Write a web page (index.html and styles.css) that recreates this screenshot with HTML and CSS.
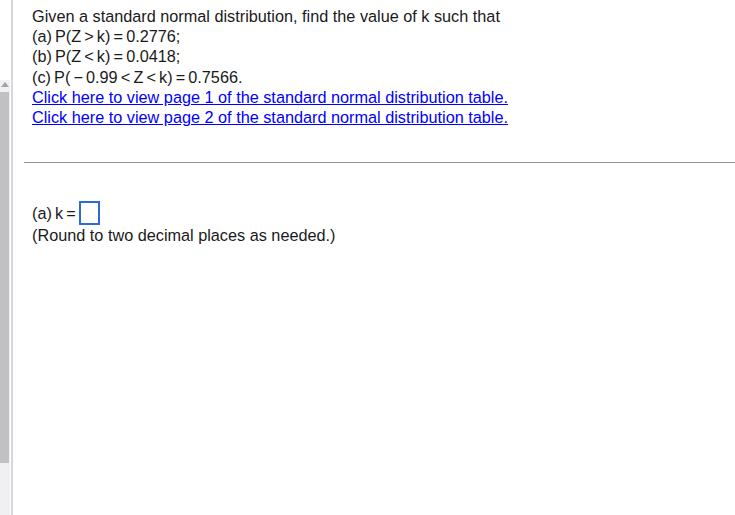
FILE: index.html
```html
<!DOCTYPE html>
<html>
<head>
<meta charset="utf-8">
<link rel="stylesheet" href="styles.css">
</head>
<body>
<div class="frame">
  <div class="scroller">
    <div class="scroll-top"></div>
    <div class="scroll-track">
      <div class="scroll-arrow"></div>
      <div class="scroll-thumb"></div>
    </div>
  </div>
  <div class="divider"></div>
  <main class="content">
    <div class="question">
      <div class="line">Given a standard normal distribution, find the value of k such that</div>
      <div class="line math">(a) P(Z &gt; k) = 0.2776;</div>
      <div class="line math">(b) P(Z &lt; k) = 0.0418;</div>
      <div class="line math">(c) P( − 0.99 &lt; Z &lt; k) = 0.7566.</div>
      <div class="line"><a href="#" class="link">Click here to view page 1 of the standard normal distribution table.</a></div>
      <div class="line"><a href="#" class="link">Click here to view page 2 of the standard normal distribution table.</a></div>
    </div>
    <hr class="rule">
    <div class="answer">
      <div class="line math answer-row">(a) k = <span class="input-box"></span></div>
      <div class="line">(Round to two decimal places as needed.)</div>
    </div>
  </main>
</div>
</body>
</html>
```
FILE: styles.css
```css
html, body {
  margin: 0;
  padding: 0;
  background: #ffffff;
}
body {
  width: 735px;
  height: 515px;
  overflow: hidden;
  font-family: "Liberation Sans", Arial, sans-serif;
  font-size: 16.25px;
  color: #1a1a1a;
}
.frame {
  display: flex;
  height: 515px;
}
.scroller {
  width: 10px;
  display: flex;
  flex-direction: column;
}
.scroll-top {
  height: 80px;
  background: #ffffff;
}
.scroll-track {
  flex: 1;
  background: #f0f0f0;
  display: flex;
  flex-direction: column;
}
.scroll-arrow {
  height: 12px;
}
.scroll-arrow::before {
  content: "";
  display: block;
  margin: 2px 0 0 1px;
  width: 0;
  height: 0;
  border-left: 4px solid transparent;
  border-right: 4px solid transparent;
  border-bottom: 5px solid #a3a3a3;
}
.scroll-thumb {
  height: 371px;
  width: 9px;
  background: #c1c1c1;
}
.divider {
  width: 2px;
  margin-left: 1px;
  background: #d6d6de;
}
.content {
  flex: 1;
  padding-top: 6px;
}
.question {
  padding-left: 19px;
}
.line {
  line-height: 20.2px;
  white-space: nowrap;
}
.math {
  word-spacing: -1.4px;
}
.link {
  color: #0000ff;
  text-decoration: underline;
}
.rule {
  border: none;
  border-top: 1px solid #8c96a8;
  height: 0;
  margin: 35px 0 0 11px;
}
.answer {
  padding-left: 19px;
  margin-top: 38px;
}
.answer-row {
  display: flex;
  align-items: center;
  height: 24px;
  gap: 3px;
}
.input-box {
  display: inline-block;
  width: 17px;
  height: 20px;
  border: 2px solid #2e6bd1;
}
```
